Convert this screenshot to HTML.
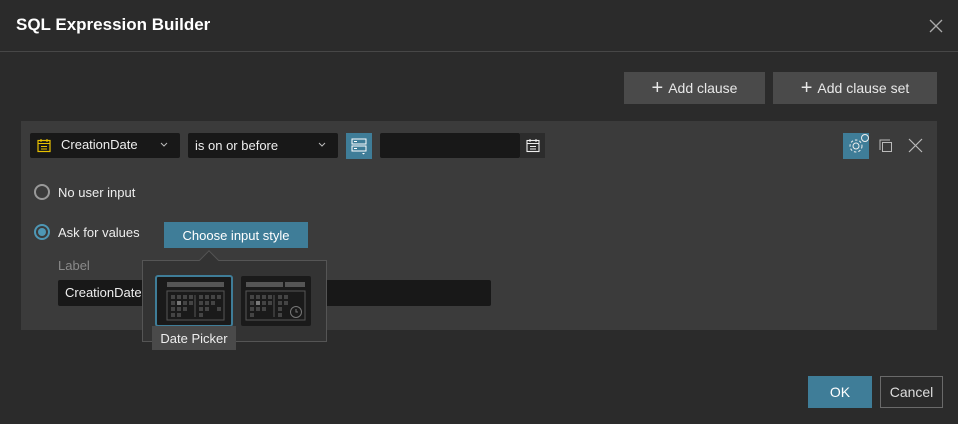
<!DOCTYPE html><html><head><style>
*{box-sizing:border-box;margin:0;padding:0}
body{width:958px;height:424px;background:#2b2b2b;font-family:"Liberation Sans",sans-serif;color:#e0e0e0;position:relative;overflow:hidden;font-size:13px}
.a{position:absolute}
.btn{background:#4a4a4a;color:#e8e8e8;font-size:14px;display:flex;align-items:center;justify-content:center}
.inp{background:#181818;border-radius:2px}
.tile{background:#1a1a1a;border-radius:2px}
</style></head><body>
<div class="a" style="left:16px;top:15px;font-size:17px;font-weight:bold;color:#fff">SQL Expression Builder</div>
<svg class="a" style="left:928px;top:18px" width="16" height="16"><path d="M2 2L14 14M14 2L2 14" stroke="#aaa" stroke-width="1.3"/></svg>
<div class="a" style="left:0;top:51px;width:958px;height:1px;background:#474747"></div>
<div class="a btn" style="left:624px;top:72px;width:141px;height:32px"><span style="font-size:20px;font-weight:300;margin-right:5px">+</span>Add clause</div>
<div class="a btn" style="left:773px;top:72px;width:164px;height:32px"><span style="font-size:20px;font-weight:300;margin-right:5px">+</span>Add clause set</div>
<div class="a" style="left:21px;top:121px;width:916px;height:209px;background:#3b3b3b"></div>
<div class="a inp" style="left:30px;top:133px;width:150px;height:25px"></div>
<svg class="a" style="left:37px;top:138px" width="14" height="15"><rect x="1" y="2.5" width="12" height="11" fill="none" stroke="#e6c000" stroke-width="1.2"/><path d="M4 1v3M10 1v3M1 5.5h12M4 8.5h6M4 11h6" stroke="#e6c000" stroke-width="1.1"/></svg>
<div class="a" style="left:61px;top:137px;color:#eee">CreationDate</div>
<svg class="a" style="left:160px;top:142px" width="8" height="6"><path d="M1 1l3 3 3-3" stroke="#bbb" fill="none"/></svg>
<div class="a inp" style="left:188px;top:133px;width:150px;height:25px"></div>
<div class="a" style="left:195px;top:138px;color:#eee">is on or before</div>
<svg class="a" style="left:318px;top:142px" width="8" height="6"><path d="M1 1l3 3 3-3" stroke="#bbb" fill="none"/></svg>
<div class="a" style="left:346px;top:133px;width:26px;height:26px;background:#3f7d98"></div>
<svg class="a" style="left:350px;top:137px" width="18" height="18"><rect x="2" y="2" width="14" height="5" fill="none" stroke="#fff"/><rect x="2" y="9" width="14" height="5" fill="none" stroke="#fff"/><path d="M4 4.5h3M4 11.5h3" stroke="#fff"/><path d="M12 16h3l-1.5 1.5z" fill="#fff"/></svg>
<div class="a inp" style="left:380px;top:133px;width:140px;height:25px"></div>
<div class="a" style="left:520px;top:133px;width:25px;height:25px;background:#2c2c2c"></div>
<svg class="a" style="left:526px;top:138px" width="14" height="15"><rect x="1" y="2.5" width="12" height="11" fill="none" stroke="#eee" stroke-width="1.1"/><path d="M4 1v3M10 1v3M1 5.5h12M4 8.5h6M4 11h6" stroke="#eee" stroke-width="1"/></svg>
<div class="a" style="left:843px;top:133px;width:26px;height:26px;background:#3f7d98"></div>
<svg class="a" style="left:843px;top:128px" width="30" height="32"><circle cx="13" cy="18" r="3" fill="none" stroke="#eee"/><circle cx="13" cy="18" r="6" fill="none" stroke="#eee" stroke-dasharray="2.5 2"/><circle cx="22" cy="10" r="3.5" fill="none" stroke="#eee"/></svg>
<svg class="a" style="left:878px;top:138px" width="16" height="16"><rect x="4.5" y="4.5" width="9" height="9" fill="none" stroke="#bbb"/><path d="M2 12V2h10" fill="none" stroke="#bbb"/></svg>
<svg class="a" style="left:908px;top:138px" width="15" height="15"><path d="M1 1L14 14M14 1L1 14" stroke="#bbb" stroke-width="1.2"/></svg>
<div class="a" style="left:34px;top:184px;width:16px;height:16px;border:2px solid #999;border-radius:50%"></div>
<div class="a" style="left:58px;top:185px;color:#eee">No user input</div>
<div class="a" style="left:34px;top:224px;width:16px;height:16px;border:2px solid #4e97b5;border-radius:50%"><div style="margin:2px;width:8px;height:8px;border-radius:50%;background:#4e97b5"></div></div>
<div class="a" style="left:58px;top:225px;color:#eee">Ask for values</div>
<div class="a" style="left:164px;top:222px;width:144px;height:26px;background:#3f7d98;color:#fff;font-size:13px;display:flex;align-items:center;justify-content:center">Choose input style</div>
<div class="a" style="left:58px;top:258px;color:#8a8a8a">Label</div>
<div class="a inp" style="left:58px;top:280px;width:433px;height:26px"></div>
<div class="a" style="left:65px;top:285px;color:#eee">CreationDate</div>
<div class="a" style="left:142px;top:260px;width:185px;height:82px;background:#333;border:1px solid #555"></div>
<div class="a" style="left:202px;top:253px;width:14px;height:14px;background:#333;border-left:1px solid #555;border-top:1px solid #555;transform:rotate(45deg)"></div>
<svg class="a" style="left:155px;top:275px" width="78" height="52"><rect x="1" y="1" width="76" height="50" rx="2" fill="#1a1a1a" stroke="#3f7d98" stroke-width="2"/><rect x="12" y="7" width="57" height="5" fill="#555"/><rect x="12" y="16" width="57" height="29" fill="none" stroke="#555"/><path d="M40 20v22" stroke="#555"/><g fill="#444"><rect x="16" y="20" width="4" height="4"/><rect x="22" y="20" width="4" height="4"/><rect x="28" y="20" width="4" height="4"/><rect x="34" y="20" width="4" height="4"/><rect x="16" y="26" width="4" height="4"/><rect x="28" y="26" width="4" height="4"/><rect x="34" y="26" width="4" height="4"/><rect x="16" y="32" width="4" height="4"/><rect x="22" y="32" width="4" height="4"/><rect x="28" y="32" width="4" height="4"/><rect x="16" y="38" width="4" height="4"/><rect x="22" y="38" width="4" height="4"/><rect x="44" y="20" width="4" height="4"/><rect x="50" y="20" width="4" height="4"/><rect x="56" y="20" width="4" height="4"/><rect x="62" y="20" width="4" height="4"/><rect x="44" y="26" width="4" height="4"/><rect x="50" y="26" width="4" height="4"/><rect x="56" y="26" width="4" height="4"/><rect x="44" y="32" width="4" height="4"/><rect x="50" y="32" width="4" height="4"/><rect x="62" y="32" width="4" height="4"/><rect x="44" y="38" width="4" height="4"/></g><rect x="22" y="26" width="4" height="4" fill="#777"/></svg>
<div class="a tile" style="left:241px;top:276px;width:70px;height:50px"></div>
<svg class="a" style="left:241px;top:276px" width="70" height="50"><rect x="5" y="6" width="37" height="5" fill="#555"/><rect x="44" y="6" width="20" height="5" fill="#555"/><rect x="5" y="15" width="59" height="29" fill="none" stroke="#555"/><path d="M33 19v22" stroke="#555"/><g fill="#444"><rect x="9" y="19" width="4" height="4"/><rect x="15" y="19" width="4" height="4"/><rect x="21" y="19" width="4" height="4"/><rect x="27" y="19" width="4" height="4"/><rect x="9" y="25" width="4" height="4"/><rect x="21" y="25" width="4" height="4"/><rect x="27" y="25" width="4" height="4"/><rect x="9" y="31" width="4" height="4"/><rect x="15" y="31" width="4" height="4"/><rect x="21" y="31" width="4" height="4"/><rect x="9" y="37" width="4" height="4"/><rect x="37" y="19" width="4" height="4"/><rect x="43" y="19" width="4" height="4"/><rect x="37" y="25" width="4" height="4"/><rect x="43" y="25" width="4" height="4"/><rect x="37" y="31" width="4" height="4"/><rect x="37" y="37" width="4" height="4"/></g><rect x="15" y="25" width="4" height="4" fill="#777"/><circle cx="55" cy="36" r="5.5" fill="none" stroke="#777"/><path d="M55 33v3h2" stroke="#777" fill="none"/></svg>
<div class="a" style="left:152px;top:326px;width:84px;height:24px;background:#4a4a4a;color:#eee;display:flex;align-items:center;justify-content:center">Date Picker</div>
<div class="a" style="left:808px;top:376px;width:64px;height:32px;background:#3f7d98;color:#fff;font-size:14px;display:flex;align-items:center;justify-content:center">OK</div>
<div class="a" style="left:880px;top:376px;width:63px;height:32px;border:1px solid #6a6a6a;color:#ddd;font-size:14px;display:flex;align-items:center;justify-content:center">Cancel</div>
</body></html>
